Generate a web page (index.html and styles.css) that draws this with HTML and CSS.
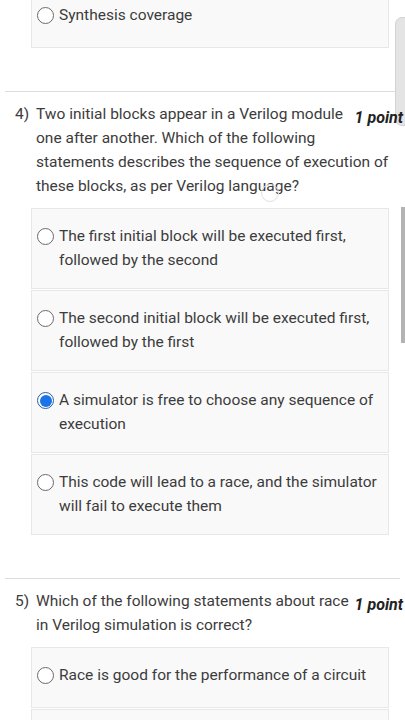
FILE: index.html
```html
<!DOCTYPE html>
<html>
<head>
<meta charset="utf-8">
<link rel="stylesheet" href="styles.css">
</head>
<body>
<div class="page">
  <div class="options first-opts">
    <label class="opt"><span class="radio"></span><span class="opt-text">Synthesis coverage</span></label>
  </div>

  <hr class="divider">

  <div class="question">
    <span class="qnum">4)</span>
    <div class="qtext"><span class="points">1 point</span>Two initial blocks appear in a Verilog module one after another. Which of the following statements describes the sequence of execution of these blocks, as per Verilog language?</div>
  </div>

  <div class="options">
    <label class="opt"><span class="radio"></span><span class="opt-text">The first initial block will be executed first, followed by the second</span></label>
    <label class="opt"><span class="radio"></span><span class="opt-text">The second initial block will be executed first, followed by the first</span></label>
    <label class="opt"><span class="radio checked"></span><span class="opt-text">A simulator is free to choose any sequence of execution</span></label>
    <label class="opt"><span class="radio"></span><span class="opt-text">This code will lead to a race, and the simulator will fail to execute them</span></label>
  </div>

  <hr class="divider">

  <div class="question">
    <span class="qnum">5)</span>
    <div class="qtext"><span class="points">1 point</span>Which of the following statements about race in Verilog simulation is correct?</div>
  </div>

  <div class="options">
    <label class="opt"><span class="radio"></span><span class="opt-text">Race is good for the performance of a circuit</span></label>
    <label class="opt"><span class="radio"></span><span class="opt-text">&nbsp;</span></label>
  </div>
</div>

<div class="ripple"></div>
<div class="scroll-thumb"></div>
<div class="scroll-bar"></div>
</body>
</html>
```

FILE: styles.css
```css
html, body {
  margin: 0;
  padding: 0;
  background: #ffffff;
  overflow: hidden;
  height: 720px;
}

body {
  font-family: Roboto, "Noto Sans", Arial, sans-serif;
  font-size: 15.5px;
  color: #3c3c3c;
  position: relative;
}

.page {
  display: flex;
  flex-direction: column;
}

.options {
  display: flex;
  flex-direction: column;
  gap: 1px;
  margin: 0 16px 0 31px;
}

.first-opts {
  margin-top: -13px;
}

.opt {
  box-sizing: border-box;
  min-height: 61px;
  display: flex;
  align-items: flex-start;
  padding: 15px 6px 16px 5px;
  background: #f9f9f9;
  border: 1px solid #e7e7e7;
  line-height: 24px;
}

.radio {
  flex: none;
  box-sizing: border-box;
  width: 17px;
  height: 17px;
  margin-top: 4px;
  margin-right: 5px;
  border: 1px solid #6a6a6a;
  border-radius: 50%;
  background: #ffffff;
}

.radio.checked {
  border: 1.5px solid #2a5f9e;
  padding: 1.5px;
  background: #ffffff;
}

.radio.checked::after {
  content: "";
  display: block;
  width: 100%;
  height: 100%;
  border-radius: 50%;
  background: #1a73e8;
}

.opt-text {
  flex: 1;
}

.divider {
  border: none;
  border-top: 1px solid #dcdcdc;
  margin: 43px 5px 10px 5px;
  height: 0;
}

.question {
  display: flex;
  line-height: 24px;
  padding-left: 15px;
  padding-right: 12px;
  margin-bottom: 10px;
}

.qnum {
  flex: none;
  width: 21px;
}

.qtext {
  flex: 1;
}

.points {
  float: right;
  position: relative;
  z-index: 2;
  font-weight: bold;
  font-style: italic;
  font-size: 16px;
  color: #222222;
  margin: 4px -10px 0 4px;
}

.ripple {
  position: absolute;
  left: 261px;
  top: 184px;
  width: 16px;
  height: 16px;
  border: 1.5px solid #e2e2e2;
  border-radius: 50%;
}

.scroll-thumb {
  position: absolute;
  z-index: 1;
  left: 395px;
  top: 17px;
  width: 16px;
  height: 107px;
  background: #e4e4e4;
  border: 1px solid #d2d2d2;
  border-radius: 7px;
}

.scroll-bar {
  position: absolute;
  left: 401px;
  top: 207px;
  width: 4px;
  height: 136px;
  background: #b3b3b3;
}
```
